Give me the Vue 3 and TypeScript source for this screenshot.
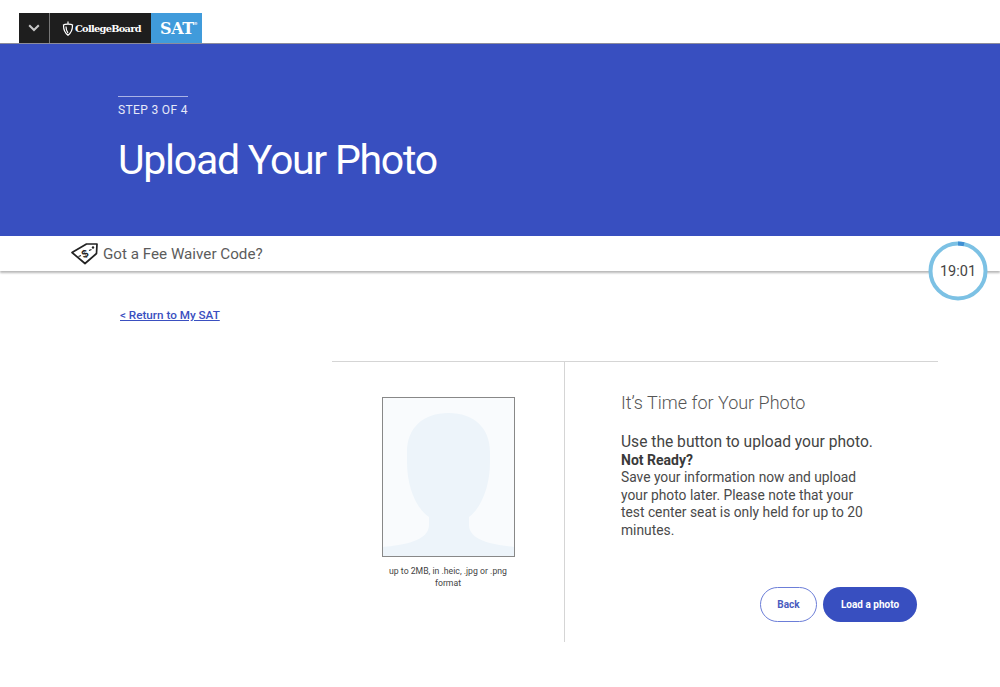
<script setup lang="ts">
const lines: string[] = [
  'Save your information now and upload',
  'your photo later. Please note that your',
  'test center seat is only held for up to 20',
  'minutes.',
]
</script>

<template>
  <div class="page">
    <header class="brandbar">
      <div class="brand">
        <button class="toggle" aria-label="Menu">
          <svg width="12" height="8" viewBox="0 0 12 8"><path d="M1.2 1.2 6 6l4.8-4.8" fill="none" stroke="#c8c8c8" stroke-width="2"/></svg>
        </button>
        <div class="cb">
          <svg width="12" height="15" viewBox="0 0 12 15"><path d="M6 0.500v2M1 4.200c2-1.500 8-1.500 10 0M1.500 4.500c0 5 1.500 7.500 4.500 9.800 3-2.300 4.500-4.800 4.500-9.800M4 5.500c0 3 .6 4.800 2 6.500" fill="none" stroke="#fff" stroke-width="1.200"/></svg>
          <span class="cb-text">CollegeBoard</span>
        </div>
        <div class="sat">SAT<sup>®</sup></div>
      </div>
    </header>

    <section class="hero">
      <div class="step">STEP 3 OF 4</div>
      <h1>Upload Your Photo</h1>
    </section>

    <section class="waiver">
      <svg class="tag" width="30" height="24" viewBox="0 0 30 24">
        <path d="M2 10.500 L16.500 2 L27 2 L26.500 11.500 L15 21.500 Z" fill="none" stroke="#222" stroke-width="1.700" stroke-linejoin="round"/>
        <circle cx="23" cy="5.500" r="1.200" fill="#222"/>
        <path d="M8.500 14.500l2.500-1M19 8.500l2.500-1" stroke="#222" stroke-width="1.200" fill="none"/>
        <text x="11.500" y="15.500" class="tag-s" transform="rotate(-25 15 11)">$</text>
      </svg>
      <span>Got a Fee Waiver Code?</span>
      <div class="timer">
        <svg width="60" height="60" viewBox="0 0 60 60">
          <circle cx="30" cy="30" r="27.500" fill="#fff" stroke="#7cc1e4" stroke-width="4"/>
          <path d="M30 2.500a27.500 27.500 0 0 1 6 .7" fill="none" stroke="#3f8fd4" stroke-width="4"/>
        </svg>
        <span class="time">19:01</span>
      </div>
    </section>

    <div class="return"><a href="#">&lt; Return to My SAT</a></div>

    <main class="panel">
      <div class="photo-col">
        <div class="photo">
          <svg width="131" height="158" viewBox="0 0 131 158">
            <rect width="131" height="158" fill="#f9fbfd"/>
            <path d="M0 149c20-2 46-6 46-22v-8c-13-9-22-30-22-55V54C24 30 40 15 65.500 15S107 30 107 54v10c0 25-9 46-21 55v8c0 16 26 20 45 22v9H0z" fill="#edf4fa"/>
          </svg>
        </div>
        <p class="hint">up to 2MB, in .heic, .jpg or .png<br>format</p>
      </div>
      <div class="text-col">
        <h2>It’s Time for Your Photo</h2>
        <p class="lead">Use the button to upload your photo.</p>
        <p class="ready">Not Ready?</p>
        <p v-for="line in lines" :key="line" class="line">{{ line }}</p>
        <div class="actions">
          <button class="btn back">Back</button>
          <button class="btn load">Load a photo</button>
        </div>
      </div>
    </main>
  </div>
</template>

<style>
html, body { margin: 0; background: #fff; }
</style>

<style scoped>
.page { width: 1000px; height: 687px; overflow: hidden; font-family: Roboto, "Liberation Sans", sans-serif; color: #333; }
.brandbar { height: 43px; padding-left: 19px; box-sizing: border-box; padding-top: 13px; }
.brand { display: flex; height: 30px; width: 183px; }
.toggle { width: 31px; height: 30px; padding: 0; border: 0; background: #1e1e1e; border-right: 1px solid #777; display: flex; align-items: center; justify-content: center; }
.cb { width: 101px; background: #1e1e1e; display: flex; align-items: center; gap: 1px; padding-left: 12px; box-sizing: border-box; }
.cb-text { color: #fff; font: 700 9.800px "DejaVu Serif", serif; letter-spacing: -0.700px; white-space: nowrap; }
.sat { width: 51px; background: #409bdb; color: #fff; font: 700 16px "DejaVu Serif", serif; letter-spacing: -0.400px; display: flex; align-items: center; padding-left: 9px; box-sizing: border-box; }
.sat sup { font-size: 4px; align-self: flex-start; margin-top: 8px; }
.hero { height: 193px; background: #384fc0; box-sizing: border-box; padding: 52px 0 0 118px; color: #fff; border-top: 1px solid #8c8c9c; }
.step { width: 70px; border-top: 1px solid #aab3e6; padding-top: 2px; font-size: 12px; line-height: 22px; letter-spacing: 0.350px; white-space: nowrap; font-weight: 400; color: #e6e9f8; }
h1 { margin: 14px 0 0; font-size: 41px; line-height: 50px; font-weight: 400; letter-spacing: -1.250px; }
.waiver { position: relative; height: 35px; display: flex; align-items: center; padding-left: 70px; gap: 3px; box-shadow: 0 2px 2px rgba(0,0,0,0.28); font-size: 15.200px; color: #5c5c5c; background: #fff; }
.tag { flex: none; }
.tag-s { font: 700 11px "Liberation Sans", sans-serif; fill: #222; }
.timer { position: absolute; left: 928px; top: 5px; width: 60px; height: 60px; display: flex; align-items: center; justify-content: center; }
.timer svg { position: absolute; inset: 0; }
.time { position: relative; font-size: 14.500px; color: #444; }
.return { padding: 36px 0 0 120px; height: 53px; box-sizing: border-box; font-size: 11.700px; font-weight: 500; line-height: 16px; }
.return a { color: #3a4fc0; }
.panel { margin: 37px 0 0 332px; width: 606px; height: 281px; border-top: 1px solid #d5d5d5; display: flex; box-sizing: border-box; }
.photo-col { width: 233px; border-right: 1px solid #d5d5d5; display: flex; flex-direction: column; align-items: center; padding-top: 35px; box-sizing: border-box; }
.photo { width: 133px; height: 160px; border: 1px solid #888; box-sizing: border-box; }
.photo svg { display: block; }
.hint { margin: 8px 0 0; font-size: 8.700px; line-height: 12px; text-align: center; color: #444; }
.text-col { position: relative; flex: 1; padding: 29px 0 0 56px; box-sizing: border-box; }
h2 { margin: 0; font-size: 18px; line-height: 24px; font-weight: 300; color: #555; }
.lead { margin: 17px 0 0; font-size: 15.600px; line-height: 20px; color: #444; }
.ready { margin: 0; font-size: 14px; line-height: 17px; font-weight: 700; color: #3a3a3a; }
.line { margin: 0; font-size: 13.800px; line-height: 17.500px; color: #4a4a4a; white-space: nowrap; }
.actions { position: absolute; right: 21px; top: 225px; display: flex; gap: 6px; }
.btn { height: 35px; border-radius: 18px; font: 700 10px Roboto, sans-serif; box-sizing: border-box; }
.back { width: 57px; background: #fff; border: 1px solid #6c7ed8; color: #4a5cc0; }
.load { width: 94px; background: #384fc0; border: 0; color: #fff; }
</style>
